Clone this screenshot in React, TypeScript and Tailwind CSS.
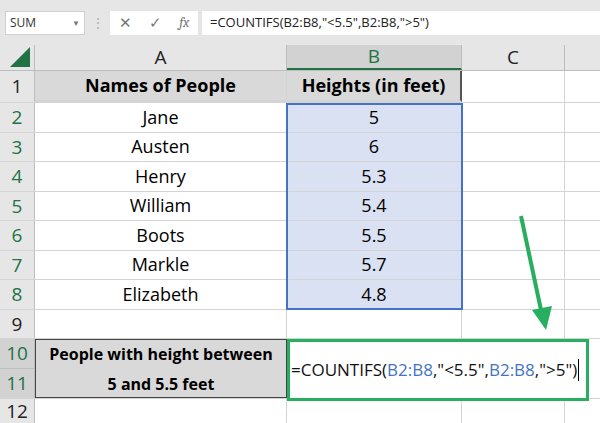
import React from "react";

const rows: [string, string, string][] = [
  ["2", "Jane", "5"],
  ["3", "Austen", "6"],
  ["4", "Henry", "5.3"],
  ["5", "William", "5.4"],
  ["6", "Boots", "5.5"],
  ["7", "Markle", "5.7"],
  ["8", "Elizabeth", "4.8"],
];

function Row({ n, a, b, h, sel, aCls = "", bCls = "", nCls = "" }: any) {
  return (
    <div className="flex border-b border-[#d4d4d4]" style={{ height: h }}>
      <div className={`w-[35px] shrink-0 bg-[#e6e6e6] border-r border-[#bdbdbd] flex items-center justify-center text-[19px] text-[#222] ${nCls}`}>{n}</div>
      <div className={`w-[252px] shrink-0 border-r border-[#d4d4d4] flex items-center justify-center text-[18px] text-black ${aCls}`}>{a}</div>
      <div className={`w-[175px] shrink-0 border-r border-[#d4d4d4] flex items-center justify-center text-[18px] text-black ${sel ? "bg-[#d9e1f2]" : ""} ${bCls}`}>{b}</div>
      <div className="w-[103px] shrink-0 border-r border-[#d4d4d4]" />
      <div className="flex-1" />
    </div>
  );
}

export default function App() {
  return (
    <div className="relative w-[600px] h-[423px] overflow-hidden bg-white" style={{ fontFamily: "'Open Sans', 'Liberation Sans', sans-serif" }}>
      <div className="h-[45px] bg-[#e6e6e6] flex items-center gap-0 pl-[5px]">
        <div className="w-[80px] h-[24px] bg-white border border-[#d0d0d0] flex items-center justify-between px-[4px] text-[12px] text-[#333]">
          SUM<span className="text-[8px] text-[#777]">▼</span>
        </div>
        <div className="w-[25px] text-center text-[#aaa] text-[12px]">⋮</div>
        <div className="w-[88px] h-[24px] bg-white flex items-center justify-around text-[#777] text-[15px]">
          <span>✕</span><span>✓</span><span className="italic font-serif text-[14px]">fx</span>
        </div>
        <div className="flex-1 ml-[4px] h-[24px] bg-white flex items-center pl-[8px] text-[13px] text-[#222]">=COUNTIFS(B2:B8,"&lt;5.5",B2:B8,"&gt;5")</div>
      </div>
      <div className="flex h-[26px] bg-[#e6e6e6] border-b border-[#bdbdbd]">
        <div className="w-[35px] border-r border-[#bdbdbd] relative">
          <div className="absolute right-[4px] bottom-[3px] w-0 h-0 border-l-[20px] border-l-transparent border-b-[20px] border-b-[#217346]" />
        </div>
        <div className="w-[252px] border-r border-[#bdbdbd] flex items-center justify-center text-[19px] text-[#222]">A</div>
        <div className="w-[175px] border-r border-[#bdbdbd] bg-[#d2d2d2] border-b-2 border-b-[#217346] flex items-center justify-center text-[19px] text-[#217346]">B</div>
        <div className="w-[103px] border-r border-[#bdbdbd] flex items-center justify-center text-[19px] text-[#222]">C</div>
      </div>
      <Row n="1" a="Names of People" b="Heights (in feet)" h={32} aCls="bg-[#d9d9d9] font-bold border-b-2 border-[#555]" bCls="bg-[#d9d9d9] font-bold border-b-2 border-[#555] !border-r-[#555] !border-r-2" />
      <div className="relative">
        {rows.map(([n, a, b]) => (
          <Row key={n} n={n} a={a} b={b} h={n === "8" ? 30 : 29.5} sel nCls="!text-[#217346] bg-[#d2d2d2]" />
        ))}
        <div className="absolute left-[286px] top-0 w-[177px] h-full border-2 border-[#4472c4] pointer-events-none" />
      </div>
      <Row n="9" a="" b="" h={29} />
      <div className="flex border-b border-[#d4d4d4] h-[60px]">
        <div className="w-[35px] bg-[#d2d2d2] border-r border-[#bdbdbd] flex flex-col text-[19px] text-[#217346]">
          <div className="flex-1 flex items-center justify-center border-b border-[#bdbdbd]">10</div>
          <div className="flex-1 flex items-center justify-center">11</div>
        </div>
        <div className="w-[252px] bg-[#d9d9d9] border border-[#444] flex flex-col items-center justify-center text-[16px] font-bold leading-[30px] text-black">
          <div>People with height between</div>
          <div>5 and 5.5 feet</div>
        </div>
        <div className="w-[175px] border-r border-[#d4d4d4]" />
        <div className="w-[103px] border-r border-[#d4d4d4]" />
      </div>
      <Row n="12" a="" b="" h={25} />
      <div className="absolute left-[287px] top-[339px] w-[302px] h-[62px] border-[3px] border-[#27ae60] bg-white flex items-center pl-[1px] text-[17px] text-[#111] whitespace-nowrap">
        =COUNTIFS(<span className="text-[#4472c4]">B2:B8</span>,"&lt;5.5",<span className="text-[#4472c4]">B2:B8</span>,"&gt;5")<span className="inline-block w-[1px] h-[22px] bg-black ml-[1px]" />
      </div>
      <svg className="absolute left-0 top-0" width="600" height="423">
        <line x1="521" y1="216" x2="541" y2="310" stroke="#27ae60" strokeWidth="4" />
        <polygon points="532,310 552,306 546,330" fill="#27ae60" />
      </svg>
    </div>
  );
}
